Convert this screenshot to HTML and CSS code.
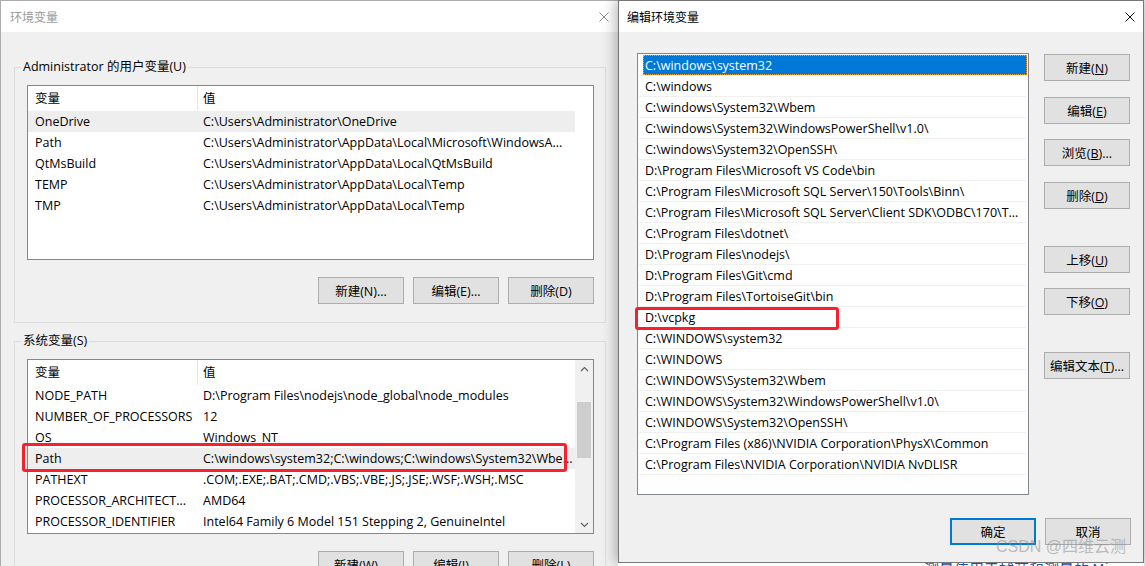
FILE: index.html
```html
<!DOCTYPE html>
<html lang="zh-CN">
<head>
  <meta charset="UTF-8">
  <title>环境变量</title>
  <link rel="stylesheet" href="styles.css">
</head>
<body>

  <div class="win win-env">
    <div class="titlebar">
      <span class="title">环境变量</span>
      <svg class="close" viewBox="0 0 10 10"><path d="M0.5 0.5 L9.5 9.5 M9.5 0.5 L0.5 9.5" stroke="#8a8a8a" stroke-width="1" fill="none"/></svg>
    </div>

    <fieldset class="group">
      <legend>Administrator 的用户变量(U)</legend>
      <div class="listview">
        <div class="lv-main">
          <div class="lv-head"><div class="col-name">变量</div><div class="col-value">值</div></div>
          <div class="lv-row sel"><div class="col-name">OneDrive</div><div class="col-value">C:\Users\Administrator\OneDrive</div></div>
          <div class="lv-row"><div class="col-name">Path</div><div class="col-value">C:\Users\Administrator\AppData\Local\Microsoft\WindowsA...</div></div>
          <div class="lv-row"><div class="col-name">QtMsBuild</div><div class="col-value">C:\Users\Administrator\AppData\Local\QtMsBuild</div></div>
          <div class="lv-row"><div class="col-name">TEMP</div><div class="col-value">C:\Users\Administrator\AppData\Local\Temp</div></div>
          <div class="lv-row"><div class="col-name">TMP</div><div class="col-value">C:\Users\Administrator\AppData\Local\Temp</div></div>
        </div>
      </div>
      <div class="btn-row">
        <button class="btn">新建(N)...</button>
        <button class="btn">编辑(E)...</button>
        <button class="btn">删除(D)</button>
      </div>
    </fieldset>

    <fieldset class="group">
      <legend>系统变量(S)</legend>
      <div class="listview">
        <div class="lv-main">
          <div class="lv-head"><div class="col-name">变量</div><div class="col-value">值</div></div>
          <div class="lv-row"><div class="col-name">NODE_PATH</div><div class="col-value">D:\Program Files\nodejs\node_global\node_modules</div></div>
          <div class="lv-row"><div class="col-name">NUMBER_OF_PROCESSORS</div><div class="col-value">12</div></div>
          <div class="lv-row"><div class="col-name">OS</div><div class="col-value">Windows_NT</div></div>
          <div class="lv-row sel"><div class="col-name">Path</div><div class="col-value">C:\windows\system32;C:\windows;C:\windows\System32\Wbe...</div></div>
          <div class="lv-row"><div class="col-name">PATHEXT</div><div class="col-value">.COM;.EXE;.BAT;.CMD;.VBS;.VBE;.JS;.JSE;.WSF;.WSH;.MSC</div></div>
          <div class="lv-row"><div class="col-name">PROCESSOR_ARCHITECT...</div><div class="col-value">AMD64</div></div>
          <div class="lv-row"><div class="col-name">PROCESSOR_IDENTIFIER</div><div class="col-value">Intel64 Family 6 Model 151 Stepping 2, GenuineIntel</div></div>
        </div>
        <div class="scrollbar">
          <div class="sb-btn"><svg viewBox="0 0 9 6"><path d="M1 5 L4.5 1.5 L8 5" stroke="#606060" stroke-width="1.2" fill="none"/></svg></div>
          <div class="sb-track"><div class="sb-thumb"></div></div>
          <div class="sb-btn"><svg viewBox="0 0 9 6"><path d="M1 1 L4.5 4.5 L8 1" stroke="#606060" stroke-width="1.2" fill="none"/></svg></div>
        </div>
        <div class="mark mark-path"></div>
      </div>
      <div class="btn-row">
        <button class="btn">新建(W)...</button>
        <button class="btn">编辑(I)...</button>
        <button class="btn">删除(L)</button>
      </div>
    </fieldset>
  </div>

  <div class="right-col">
    <div class="win win-edit">
      <div class="titlebar">
        <span class="title">编辑环境变量</span>
        <svg class="close" viewBox="0 0 10 10"><path d="M0.5 0.5 L9.5 9.5 M9.5 0.5 L0.5 9.5" stroke="#111" stroke-width="1" fill="none"/></svg>
      </div>
      <div class="edit-body">
        <div class="edit-main">
          <div class="pathlist">
            <div class="path-row sel"><div class="path-cell">C:\windows\system32</div></div>
            <div class="path-row"><div class="path-cell">C:\windows</div></div>
            <div class="path-row"><div class="path-cell">C:\windows\System32\Wbem</div></div>
            <div class="path-row"><div class="path-cell">C:\windows\System32\WindowsPowerShell\v1.0\</div></div>
            <div class="path-row"><div class="path-cell">C:\windows\System32\OpenSSH\</div></div>
            <div class="path-row"><div class="path-cell">D:\Program Files\Microsoft VS Code\bin</div></div>
            <div class="path-row"><div class="path-cell">C:\Program Files\Microsoft SQL Server\150\Tools\Binn\</div></div>
            <div class="path-row"><div class="path-cell">C:\Program Files\Microsoft SQL Server\Client SDK\ODBC\170\T...</div></div>
            <div class="path-row"><div class="path-cell">C:\Program Files\dotnet\</div></div>
            <div class="path-row"><div class="path-cell">D:\Program Files\nodejs\</div></div>
            <div class="path-row"><div class="path-cell">D:\Program Files\Git\cmd</div></div>
            <div class="path-row"><div class="path-cell">D:\Program Files\TortoiseGit\bin</div></div>
            <div class="path-row"><div class="path-cell">D:\vcpkg</div></div>
            <div class="path-row"><div class="path-cell">C:\WINDOWS\system32</div></div>
            <div class="path-row"><div class="path-cell">C:\WINDOWS</div></div>
            <div class="path-row"><div class="path-cell">C:\WINDOWS\System32\Wbem</div></div>
            <div class="path-row"><div class="path-cell">C:\WINDOWS\System32\WindowsPowerShell\v1.0\</div></div>
            <div class="path-row"><div class="path-cell">C:\WINDOWS\System32\OpenSSH\</div></div>
            <div class="path-row"><div class="path-cell">C:\Program Files (x86)\NVIDIA Corporation\PhysX\Common</div></div>
            <div class="path-row"><div class="path-cell">C:\Program Files\NVIDIA Corporation\NVIDIA NvDLISR</div></div>
            <div class="mark mark-vcpkg"></div>
          </div>
          <div class="side-btns">
            <button class="btn">新建(<u>N</u>)</button>
            <button class="btn">编辑(<u>E</u>)</button>
            <button class="btn">浏览(<u>B</u>)...</button>
            <button class="btn">删除(<u>D</u>)</button>
            <button class="btn sep">上移(<u>U</u>)</button>
            <button class="btn">下移(<u>O</u>)</button>
            <button class="btn sep">编辑文本(<u>T</u>)...</button>
          </div>
        </div>
        <div class="edit-foot">
          <button class="btn btn-default">确定</button>
          <button class="btn">取消</button>
        </div>
      </div>
    </div>
    <div class="behind">测量值用于捕获和测量的 Microsoft 服务</div>
  </div>

  <div class="watermark">CSDN @四维云测</div>

</body>
</html>
```

FILE: styles.css
```css
* {
  box-sizing: border-box;
}

body {
  margin: 0;
  width: 1146px;
  height: 566px;
  overflow: hidden;
  position: relative;
  display: flex;
  align-items: flex-start;
  background: #e4e4e4;
  font-family: "Open Sans", "Noto Sans CJK SC", sans-serif;
  font-size: 12.5px;
  color: #000;
}

/* windows */

.win {
  background: #f0f0f0;
  flex-shrink: 0;
}

.win-env {
  width: 618px;
  height: 620px;
  border-top: 1px solid #acacac;
  border-left: 1px solid #acacac;
}

.titlebar {
  height: 31px;
  background: #fff;
  display: flex;
  align-items: center;
  justify-content: space-between;
  padding: 0 9px 0 9px;
}

.title {
  font-size: 12px;
  line-height: 16px;
  font-family: "Noto Sans CJK SC", sans-serif;
}

.win-env .title {
  color: #999;
}

.close {
  width: 10px;
  height: 10px;
  display: block;
}

/* group boxes */

.group {
  margin: 26px 0 0 13px;
  width: 592px;
  min-width: 0;
  border: 1px solid #dcdcdc;
  padding: 9px 0 18px 12px;
}

.group + .group {
  margin-top: 9px;
}

.group legend {
  margin-left: -6px;
  padding: 0 2px;
  line-height: 18px;
}

/* list views */

.listview {
  position: relative;
  display: flex;
  width: 567px;
  height: 175px;
  border: 1px solid #828790;
  background: #fff;
}

.lv-main {
  width: 547px;
}

.lv-head,
.lv-row {
  display: flex;
  white-space: nowrap;
}

.lv-head {
  height: 25px;
  line-height: 25px;
}

.lv-row {
  height: 21px;
  line-height: 21px;
}

.lv-row.sel {
  background: #eeeeee;
}

.col-name {
  width: 169px;
  padding-left: 7px;
  overflow: hidden;
}

.col-value {
  flex: 1;
  padding-left: 6px;
  overflow: hidden;
}

.lv-head .col-value {
  border-left: 1px solid #e5e5e5;
  padding-left: 5px;
}

.scrollbar {
  width: 18px;
  display: flex;
  flex-direction: column;
  background: #f0f0f0;
}

.sb-btn {
  height: 17px;
  display: flex;
  align-items: center;
  justify-content: center;
}

.sb-btn svg {
  width: 9px;
  height: 6px;
}

.sb-track {
  flex: 1;
}

.sb-thumb {
  margin: 25px 2px 0 2px;
  height: 56px;
  background: #cdcdcd;
}

/* buttons */

.btn {
  width: 86px;
  height: 27px;
  padding: 0;
  background: #e1e1e1;
  border: 1px solid #adadad;
  font: inherit;
  color: #000;
  white-space: nowrap;
}

.btn u {
  text-underline-offset: 1px;
}

.btn-default {
  border: 2px solid #0078d7;
}

.btn-row {
  display: flex;
  justify-content: flex-end;
  gap: 9px;
  width: 567px;
  margin-top: 17px;
}

/* annotation boxes */

.mark {
  position: absolute;
  border: 3px solid #f5222d;
  border-radius: 3px;
}

.mark-path {
  left: -6px;
  top: 83px;
  width: 545px;
  height: 29px;
}

.mark-vcpkg {
  left: -3px;
  top: 253px;
  width: 204px;
  height: 23px;
}

/* edit dialog */

.right-col {
  position: relative;
  z-index: 1;
  width: 526px;
  flex-shrink: 0;
}

.win-edit {
  height: 563px;
  border: 1px solid #777;
  box-shadow: -3px 0 12px rgba(0, 0, 0, 0.28);
}

.win-edit .titlebar {
  padding-right: 8px;
  padding-left: 8px;
}

.edit-body {
  padding: 21px 12px 0 18px;
}

.edit-main {
  display: flex;
}

.pathlist {
  position: relative;
  width: 392px;
  height: 442px;
  padding: 1px;
  border: 1px solid #828790;
  background: #fff;
}

.path-row {
  height: 21px;
  border-bottom: 1px solid #f0f0f0;
}

.path-cell {
  height: 20px;
  line-height: 21px;
  margin-left: 4px;
  padding-left: 2px;
  white-space: nowrap;
  overflow: hidden;
}

.path-row.sel .path-cell {
  background: #0078d7;
  color: #fff;
  outline: 1px dotted #e8a040;
  outline-offset: -1px;
}

.side-btns {
  display: flex;
  flex-direction: column;
  margin-left: 15px;
}

.side-btns .btn {
  margin-top: 15.5px;
}

.side-btns .btn:first-child {
  margin-top: 1px;
}

.side-btns .btn.sep {
  margin-top: 37px;
}

.edit-foot {
  display: flex;
  justify-content: flex-end;
  gap: 9px;
  margin-top: 23px;
}

.behind {
  height: 10px;
  padding-left: 306px;
  background: #fff;
  color: #1d4fa3;
  font-family: "Noto Sans CJK SC", sans-serif;
  font-size: 15px;
  line-height: 12px;
  white-space: nowrap;
  overflow: hidden;
}

.watermark {
  position: absolute;
  left: 996px;
  top: 537px;
  z-index: 2;
  font-family: "Liberation Sans", "Noto Sans CJK SC", sans-serif;
  font-size: 16px;
  line-height: 20px;
  color: rgba(140, 140, 140, 0.55);
}
```
